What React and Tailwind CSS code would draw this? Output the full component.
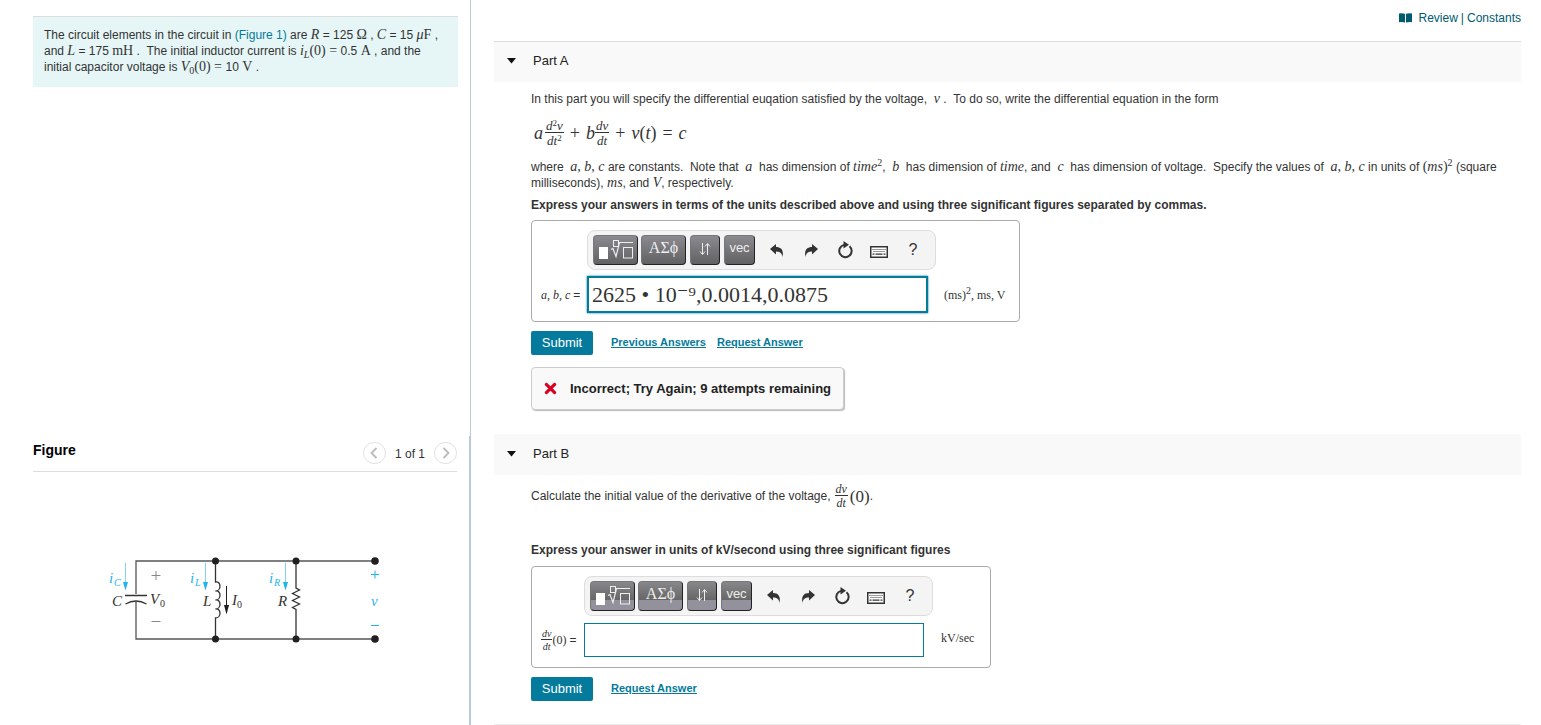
import { FaTimes } from "react-icons/fa";

const MATH = "font-['Liberation_Serif','DejaVu_Serif',serif]";

/* An italic variable */
function Var({ children, className = "" }) {
  return (
    <i className={`font-['Liberation_Serif',serif] text-[14px] leading-none ${className}`}>
      {children}
    </i>
  );
}

/* Upright maths: units, brackets, digits */
function Rm({ children, className = "" }) {
  return (
    <span className={`font-['Liberation_Serif',serif] text-[14px] leading-none ${className}`}>
      {children}
    </span>
  );
}

function Sup({ children }) {
  return <sup className="text-[10px] not-italic leading-none">{children}</sup>;
}

function Frac({ top, bottom, className = "text-[12px] leading-[12px]" }) {
  return (
    <span
      className={`inline-flex flex-col items-center align-middle italic font-['Liberation_Serif',serif] ${className}`}
    >
      <span className="border-b border-[#333] px-px">{top}</span>
      <span className="pt-px">{bottom}</span>
    </span>
  );
}

function UndoIcon({ className = "" }) {
  return (
    <svg width="14" height="13" viewBox="0 0 14 13" className={className} aria-hidden="true">
      <path
        d="M0 5 6 0v3c5 0 8 3 6.500 10C12 9 10 7.500 6 7.500V10.500Z"
        fill="#333"
      />
    </svg>
  );
}

function ResetIcon() {
  return (
    <svg width="16" height="18" viewBox="0 0 16 18" aria-hidden="true">
      <path d="M12.500 5.200A6.200 6.200 0 1 1 7 3.900" fill="none" stroke="#333" strokeWidth="2" />
      <path d="M6.500 0 12 3.800 6.500 7.500Z" fill="#333" />
    </svg>
  );
}

function KeyboardIcon() {
  return (
    <svg width="18" height="12" viewBox="0 0 18 12" className="mt-1" aria-hidden="true">
      <rect x=".75" y=".75" width="16.500" height="10.500" fill="#fff" stroke="#333" strokeWidth="1.500" />
      <path d="M2.500 3.500h13M3.500 5.500h12" stroke="#333" strokeWidth="1.200" strokeDasharray="1 1" />
      <path d="M2.500 8.200h2M5.500 8.200h7M13.500 8.200h2" stroke="#333" strokeWidth="1.200" />
    </svg>
  );
}

function RootIcon() {
  return (
    <svg width="36" height="20" viewBox="0 0 36 20" aria-hidden="true">
      <rect x="1" y="7" width="9" height="12" fill="#fff" />
      <rect x="15.500" y=".5" width="5" height="6" fill="none" stroke="#eee" />
      <path d="M13 9.500 15 8.500 18 16.500 21.500 2.500H35" fill="none" stroke="#eee" strokeWidth="1.200" />
      <rect x="25.500" y="7.500" width="9" height="10.500" fill="none" stroke="#eee" />
    </svg>
  );
}

function UpDownIcon() {
  return (
    <svg width="12" height="14" viewBox="0 0 12 14" className="mb-[2px]" fill="none" stroke="#eee" aria-hidden="true">
      <path d="M3.500 1v11M1 9.500l2.500 3 2.500-3M8.500 13V2M6 4.500l2.500-3 2.500 3" />
    </svg>
  );
}

function Toolbar({ split }) {
  const key = `flex h-[30px] items-center justify-center rounded border border-[#777] border-b-[#222] border-r-[#222] text-[#eee] ${
    split
      ? "bg-linear-to-b from-[#88888c] via-[#666] via-65% to-[#92919c] to-65%"
      : "bg-linear-to-b from-[#8a8a90] to-[#626264]"
  }`;
  const tool = "flex h-[30px] w-[34px] items-center justify-center";

  return (
    <div className="col-span-2 col-start-2 flex h-10 w-[349px] items-center gap-[3px] rounded-lg border border-[#ddd] bg-[#f4f4f4] px-[5px]">
      <button className={`${key} w-[45px]`} aria-label="Templates">
        <RootIcon />
      </button>
      <button className={`${key} w-[45px] pb-1 font-['Liberation_Serif',serif] text-[16px]`}>
        ΑΣϕ
      </button>
      <button className={`${key} mx-px w-[30px]`} aria-label="Subscript and superscript">
        <UpDownIcon />
      </button>
      <button className={`${key} w-[31px] pb-1 text-[13px]`}>vec</button>
      <div className="ml-[2px] flex">
        <button className={tool} aria-label="Undo">
          <UndoIcon />
        </button>
        <button className={tool} aria-label="Redo">
          <UndoIcon className="-scale-x-100" />
        </button>
        <button className={tool} aria-label="Reset">
          <ResetIcon />
        </button>
        <button className={tool} aria-label="Keyboard">
          <KeyboardIcon />
        </button>
        <button className={`${tool} text-[16px]`} aria-label="Help">
          ?
        </button>
      </div>
    </div>
  );
}

function PartHeader({ title, className = "" }) {
  return (
    <button
      className={`flex h-[41px] w-full items-center border-t bg-[#f9f9f9] pb-[2px] pl-3 text-left text-[13px] text-[#222] ${className}`}
    >
      <svg width="11" height="6" viewBox="0 0 11 6" className="mr-4" aria-hidden="true">
        <path d="M1 0h9L5.500 5.500Z" fill="#111" />
      </svg>
      {title}
    </button>
  );
}

function SubmitRow({ links }) {
  return (
    <div className="mt-[9px] flex items-center">
      <button className="h-6 w-[62px] rounded-xs bg-[#047a9c] text-[13px] text-white">
        Submit
      </button>
      <div className="ml-[18px] flex gap-[11px] pb-[2px] text-[11px] font-bold text-[#047a9c] underline">
        {links.map((link) => (
          <a key={link} href="#">
            {link}
          </a>
        ))}
      </div>
    </div>
  );
}

function Circuit() {
  const blue = "#1fb5ea";
  return (
    <svg
      width="280"
      height="100"
      viewBox="105 550 280 100"
      className="font-['Liberation_Serif',serif]"
      role="img"
      aria-label="Parallel RLC circuit"
    >
      <g fill="none" stroke="#555" strokeWidth="1.300">
        <path d="M375 561H136V594M136 601V639H375" />
        <path d="M125 595.500H147M125.500 604Q136 598 146.500 604" stroke="#333" />
        <path
          d="M215.500 561V582c6-1 6 9 0 9 6-1 6 9 0 9 6-1 6 9 0 9 6-1 6 9 0 9V639"
          stroke="#333"
        />
        <path
          d="M296 561V588l3.500 2-7 3.500 7 3.500-7 3.500 7 3.500-7 3.500 3.500 2V639"
          stroke="#333"
        />
      </g>

      <g fill="#231f20">
        <circle cx="215.500" cy="561" r="3.500" />
        <circle cx="296" cy="561" r="3.500" />
        <circle cx="375" cy="561" r="3.800" />
        <circle cx="215.500" cy="639" r="3.500" />
        <circle cx="296" cy="639" r="3.500" />
        <circle cx="375" cy="639" r="3.800" />
        <path d="M224 605h5l-2.500 9.500Z" />
        <path d="M226.500 586v20" stroke="#231f20" />
      </g>

      <g fill={blue} stroke={blue}>
        <path d="M125.500 563v20M205.500 563v20M285.500 563v20" stroke="#7fd3f1" />
        <path
          d="M123 582h5l-2.500 8.500ZM203 582h5l-2.500 8.500ZM283 582h5l-2.500 8.500Z"
          stroke="none"
        />
        <path d="M371 574.500h8M375 570.500v8M371 625.500h8" strokeWidth="1" />
      </g>

      <path d="M151.500 575.500h9M156 571v9M151.500 621.500h9" stroke="#888" />

      <g fontStyle="italic" fontSize="15" fill="#333">
        <text x="112" y="606">C</text>
        <text x="150" y="604">V</text>
        <text x="203" y="606">L</text>
        <text x="232" y="605">I</text>
        <text x="278" y="606">R</text>
        <g fill={blue}>
          <text x="109" y="583">i</text>
          <text x="190" y="583">i</text>
          <text x="269" y="583">i</text>
          <text x="371" y="606">v</text>
        </g>
        <g fill={blue} fontSize="10">
          <text x="114" y="586">C</text>
          <text x="195" y="586">L</text>
          <text x="274" y="586">R</text>
        </g>
      </g>
      <g fontSize="10" fill="#333">
        <text x="160" y="607">0</text>
        <text x="237" y="608">0</text>
      </g>
    </svg>
  );
}

function Sidebar() {
  const pager =
    "flex h-[22px] w-[23px] items-center justify-center rounded-full border border-[#e2e2e2]";

  return (
    <aside className="flex w-[471px] shrink-0 flex-col">
      <div className="h-[436px] border-r border-[#b9cbd9] pl-[33px] pr-3 pt-4">
        <p className="h-[71px] border-t border-[#ddd] bg-[#e6f6f7] pl-[11px] pt-[10px] leading-4">
          The circuit elements in the circuit in{" "}
          <a href="#" className="text-[#047a9c]">
            (Figure 1)
          </a>{" "}
          are <Var>R</Var> = 125 <Rm>Ω</Rm> , <Var>C</Var> = 15 <Var>μ</Var>
          <Rm>F</Rm> ,<br />
          and <Var>L</Var> = 175 <Rm>mH</Rm> . &nbsp;The initial inductor current is <Var>i</Var>
          <sub className="font-['Liberation_Serif',serif] text-[10px] italic leading-none">L</sub>
          <Rm>(0) = </Rm>0.5 <Rm>A</Rm> , and the
          <br />
          initial capacitor voltage is <Var>V</Var>
          <sub className="font-['Liberation_Serif',serif] text-[10px] leading-none">0</sub>
          <Rm>(0) = </Rm>10 <Rm>V</Rm> .
        </p>
      </div>

      <div className="flex-1 border-r-2 border-[#b9cbd9] pl-[33px] pr-3">
        <div className="flex h-9 items-center justify-between border-b border-[#ddd] pb-[2px]">
          <h2 className="pb-1 text-[14px] font-bold text-black">Figure</h2>
          <div className="flex items-center gap-[9px]">
            <button className={pager} aria-label="Previous figure">
              <svg width="8" height="12" viewBox="0 0 8 12" aria-hidden="true">
                <path d="M6.500 1 1.500 6l5 5" fill="none" stroke="#bbb" strokeWidth="1.800" />
              </svg>
            </button>
            <span className="pt-[2px]">1 of 1</span>
            <button className={pager} aria-label="Next figure">
              <svg width="8" height="12" viewBox="0 0 8 12" aria-hidden="true">
                <path d="m1.500 1 5 5-5 5" fill="none" stroke="#bbb" strokeWidth="1.800" />
              </svg>
            </button>
          </div>
        </div>
        <div className="pl-[72px] pt-[78px]">
          <Circuit />
        </div>
      </div>
    </aside>
  );
}

function PartA() {
  return (
    <section>
      <PartHeader title="Part A" className="border-[#ddd]" />
      <div className="pl-[37px] pr-5">
        <p className="mt-[9px] leading-4">
          In this part you will specify the differential euqation satisfied by the voltage, &nbsp;
          <Var>v</Var> . &nbsp;To do so, write the differential equation in the form
        </p>

        <div className={`mt-3 flex h-7 items-center pl-[3px] text-[18px] ${MATH}`}>
          <i>a</i>
          <Frac
            className="ml-[2px] text-[13px] leading-[13px]"
            top={
              <>
                d<sup className="text-[9px] not-italic leading-none">2</sup>v
              </>
            }
            bottom={
              <>
                dt<sup className="text-[9px] not-italic leading-none">2</sup>
              </>
            }
          />
          <span className="mx-[6px]">+</span>
          <i>b</i>
          <Frac top="dv" bottom="dt" className="text-[13px] leading-[13px]" />
          <span className="mx-[6px]">+</span>
          <i>v</i>(<i>t</i>)<span className="mx-[6px]">=</span>
          <i>c</i>
        </div>

        <p className="mt-3 leading-4">
          where &nbsp;<Var>a, b, c</Var> are constants. &nbsp;Note that &nbsp;<Var>a</Var> &nbsp;has
          dimension of{" "}
          <Var>
            time
            <Sup>2</Sup>
          </Var>
          , &nbsp;<Var>b</Var> &nbsp;has dimension of <Var>time</Var>, and &nbsp;<Var>c</Var>{" "}
          &nbsp;has dimension of voltage. &nbsp;Specify the values of &nbsp;<Var>a, b, c</Var> in
          units of <Rm>(</Rm>
          <Var>ms</Var>
          <Rm>
            )<Sup>2</Sup>
          </Rm>{" "}
          <span>(square</span> <span>milliseconds),</span> <Var>ms</Var>, and <Var>V</Var>,
          respectively.
        </p>

        <p className="mt-[6px] font-bold leading-4">
          Express your answers in terms of the units described above and using three significant
          figures separated by commas.
        </p>

        <div className="mt-[7px] grid h-[102px] w-fit grid-cols-[38px_341px_auto] content-start items-center gap-x-2 gap-y-[6px] rounded border border-[#aaa] pl-[9px] pr-[14px] pt-[9px]">
          <Toolbar />
          <label htmlFor="answer-a" className={`col-start-1 whitespace-nowrap text-[12px] ${MATH}`}>
            <i>a, b, c</i> <span className="font-['Liberation_Sans',sans-serif]">=</span>
          </label>
          <input
            id="answer-a"
            type="text"
            defaultValue="2625 • 10⁻⁹,0.0014,0.0875"
            className="h-[37px] w-full border-2 border-[#047a9c] bg-white px-[3px] font-['Liberation_Serif','DejaVu_Serif',serif] text-[22px] shadow-[0_0_2px_#047a9c] outline-none"
          />
          <span className="pl-2 font-['Liberation_Serif',serif] text-[12px]">
            (ms)<Sup>2</Sup>, ms, V
          </span>
        </div>

        <SubmitRow links={["Previous Answers", "Request Answer"]} />

        <div className="mt-3 flex h-[43px] w-fit items-center gap-[11px] rounded border border-[#ccc] bg-[#f9f9f9] pl-[10px] pr-3 text-[13px] font-bold text-[#222] shadow-[1px_1px_1px_#bbb]">
          <FaTimes className="text-[17px] text-[#db0020]" />
          Incorrect; Try Again; 9 attempts remaining
        </div>
      </div>
    </section>
  );
}

function PartB() {
  return (
    <section className="mt-6">
      <PartHeader title="Part B" className="border-[#f9f9f9]" />
      <div className="pl-[37px] pr-5">
        <p className="mt-[7px] flex h-7 items-center">
          Calculate the initial value of the derivative of the voltage,
          <Frac top="dv" bottom="dt" className="ml-1 text-[12px] leading-[12px]" />
          <Rm className="ml-[2px] text-[17px]">(0)</Rm>.
        </p>

        <p className="mt-8 font-bold leading-4">
          Express your answer in units of kV/second using three significant figures
        </p>

        <div className="mt-2 grid h-[102px] w-fit grid-cols-[38px_340px_auto] content-start items-center gap-x-[5px] gap-y-[7px] rounded border border-[#aaa] pl-[9px] pr-4 pt-[9px]">
          <Toolbar split />
          <label
            htmlFor="answer-b"
            className="col-start-1 flex items-center whitespace-nowrap font-['Liberation_Serif',serif] text-[12px]"
          >
            <Frac top="dv" bottom="dt" className="text-[10px] leading-[11px]" />
            (0)<span className="ml-[3px] font-['Liberation_Sans',sans-serif]">=</span>
          </label>
          <input
            id="answer-b"
            type="text"
            className="h-[34px] w-full border border-[#047a9c] bg-white px-1 font-['Liberation_Serif',serif] text-[22px] outline-none"
          />
          <span className="pb-1 pl-3 font-['Liberation_Serif',serif] text-[12px]">kV/sec</span>
        </div>

        <SubmitRow links={["Request Answer"]} />
      </div>
    </section>
  );
}

export default function App() {
  return (
    <div className="flex min-h-screen bg-white font-['Liberation_Sans',Arial,sans-serif] text-[12px] text-[#333]">
      <Sidebar />
      <main className="min-w-0 flex-1 pl-[23px] pr-5">
        <div className="flex h-[41px] items-center justify-end pb-[6px] text-[#005a70]">
          <svg width="13" height="10" viewBox="0 0 13 10" className="mr-[6px]" aria-hidden="true">
            <path d="M0 .5Q3 0 6 .8V9.500Q3 8.800 0 9.200ZM7 .8Q10 0 13 .5V9.200Q10 8.800 7 9.500Z" fill="#005a70" />
          </svg>
          <a href="#">Review</a>
          <span className="mx-[3px]">|</span>
          <a href="#">Constants</a>
        </div>
        <PartA />
        <PartB />
        <div className="mt-[23px] border-t border-[#eee]" />
      </main>
    </div>
  );
}
